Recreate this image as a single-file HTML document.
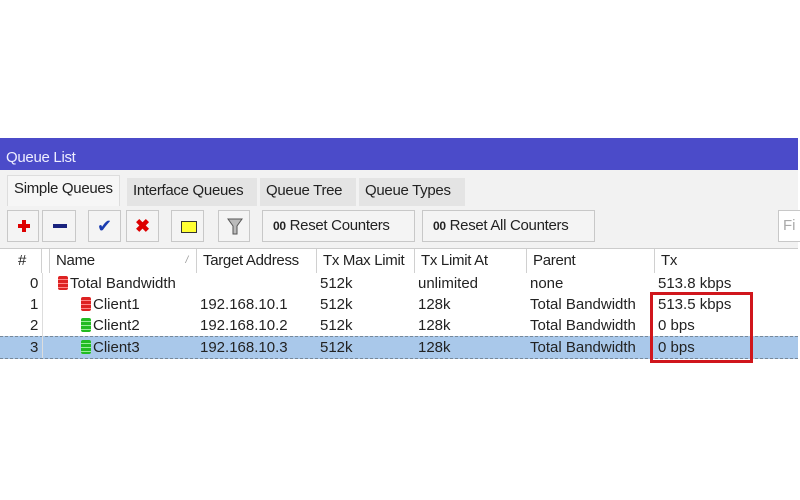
<!DOCTYPE html><html><head><style>
body{margin:0;width:800px;height:500px;background:#fff;position:relative;overflow:hidden;font-family:"Liberation Sans",sans-serif;font-size:15px;color:#222}
.a{position:absolute}
.btn{position:absolute;top:210px;height:32px;border:1px solid #c8c8c8;background:#f4f4f4;box-sizing:border-box}
.tab{position:absolute;top:178px;height:28px;line-height:26px;background:#e4e4e4;padding:0 6px;box-sizing:border-box;font-size:15px;letter-spacing:-0.3px}
.row{position:absolute;left:0;width:798px;height:21px;line-height:21px}
.row span{position:absolute}
.hd span{position:absolute;top:0;height:24px;line-height:24px;border-right:1px solid #d0d0d0;padding-left:6px;box-sizing:border-box}
.ic{display:inline-block;width:10px;height:14px;border-radius:2px;vertical-align:-2px;margin-right:2px;background:repeating-linear-gradient(#d22 0 3px,#f88 3px 4px)}
.g{background:repeating-linear-gradient(#2b2 0 3px,#9e9 3px 4px)}
</style></head><body>
<div class="a" style="left:0;top:138px;width:798px;height:220px;background:#f2f2f2"></div>
<div class="a" style="left:0;top:138px;width:798px;height:32px;background:#4b4bc9;color:#eef;line-height:40px;padding-left:6px;box-sizing:border-box;font-size:15px;letter-spacing:-0.3px">Queue List</div>
<div class="tab" style="left:7px;top:175px;height:31px;background:#f6f6f6;border:1px solid #ddd;border-bottom:none">Simple Queues</div>
<div class="tab" style="left:127px;width:130px">Interface Queues</div>
<div class="tab" style="left:260px;width:96px">Queue Tree</div>
<div class="tab" style="left:359px;width:106px">Queue Types</div>
<div class="btn" style="left:7px;width:32px"><div class="a" style="left:10px;top:13px;width:12px;height:4px;background:#d00"></div><div class="a" style="left:14px;top:9px;width:4px;height:12px;background:#d00"></div></div>
<div class="btn" style="left:42px;width:34px"><div class="a" style="left:10px;top:13px;width:14px;height:4px;background:#1a237e"></div></div>
<div class="btn" style="left:88px;width:33px;color:#1a3cb0;font-size:18px;text-align:center;line-height:30px">✔</div>
<div class="btn" style="left:126px;width:33px;color:#d00;font-size:18px;text-align:center;line-height:30px;font-weight:bold">✖</div>
<div class="btn" style="left:171px;width:33px"><div class="a" style="left:9px;top:10px;width:14px;height:10px;background:#ff3;border:1px solid #333"></div></div>
<div class="btn" style="left:218px;width:32px"><svg class="a" style="left:8px;top:7px" width="16" height="18"><path d="M1 1H15L10 8V16H6V8Z" fill="#bbb" stroke="#555"/></svg></div>
<div class="btn" style="left:262px;width:153px;line-height:30px;padding-left:10px;letter-spacing:-0.3px"><b style="font-size:12px">00</b> Reset Counters</div>
<div class="btn" style="left:422px;width:173px;line-height:30px;padding-left:10px;letter-spacing:-0.3px"><b style="font-size:12px">00</b> Reset All Counters</div>
<div class="btn" style="left:778px;width:30px;background:#fff;color:#aaa;line-height:30px;padding-left:4px">Fi</div>
<div class="a hd" style="left:0;top:248px;width:798px;height:24px;background:#fff;border-top:1px solid #ccc;border-bottom:1px solid #ccc;letter-spacing:-0.3px">
<span style="left:0;width:42px;padding-left:18px">#</span><span style="left:42px;width:8px"></span><span style="left:50px;width:147px">Name<i style="position:absolute;right:8px;color:#999;font-size:10px">/</i></span><span style="left:197px;width:120px">Target Address</span><span style="left:317px;width:98px">Tx Max Limit</span><span style="left:415px;width:112px">Tx Limit At</span><span style="left:527px;width:128px">Parent</span><span style="left:655px;width:143px;border:none">Tx</span></div>
<div class="a" style="left:0;top:273px;width:798px;height:85px;background:#fff"></div>
<div class="row" style="top:273px"><span style="left:30px">0</span><span style="left:58px"><i class="ic"></i>Total Bandwidth</span><span style="left:320px">512k</span><span style="left:418px">unlimited</span><span style="left:530px">none</span><span style="left:658px">513.8 kbps</span></div>
<div class="row" style="top:294px"><span style="left:30px">1</span><span style="left:81px"><i class="ic"></i>Client1</span><span style="left:200px">192.168.10.1</span><span style="left:320px">512k</span><span style="left:418px">128k</span><span style="left:530px">Total Bandwidth</span><span style="left:658px">513.5 kbps</span></div>
<div class="row" style="top:315px"><span style="left:30px">2</span><span style="left:81px"><i class="ic g"></i>Client2</span><span style="left:200px">192.168.10.2</span><span style="left:320px">512k</span><span style="left:418px">128k</span><span style="left:530px">Total Bandwidth</span><span style="left:658px">0 bps</span></div>
<div class="row" style="top:336px;background:#a9c8ea;border-top:1px dashed #789;border-bottom:1px dashed #789"><span style="left:30px">3</span><span style="left:81px"><i class="ic g"></i>Client3</span><span style="left:200px">192.168.10.3</span><span style="left:320px">512k</span><span style="left:418px">128k</span><span style="left:530px">Total Bandwidth</span><span style="left:658px">0 bps</span></div>
<div class="a" style="left:42px;top:273px;width:1px;height:85px;background:#ddd"></div>
<div class="a" style="left:650px;top:292px;width:97px;height:65px;border:3px solid #d0161c"></div>
</body></html>
